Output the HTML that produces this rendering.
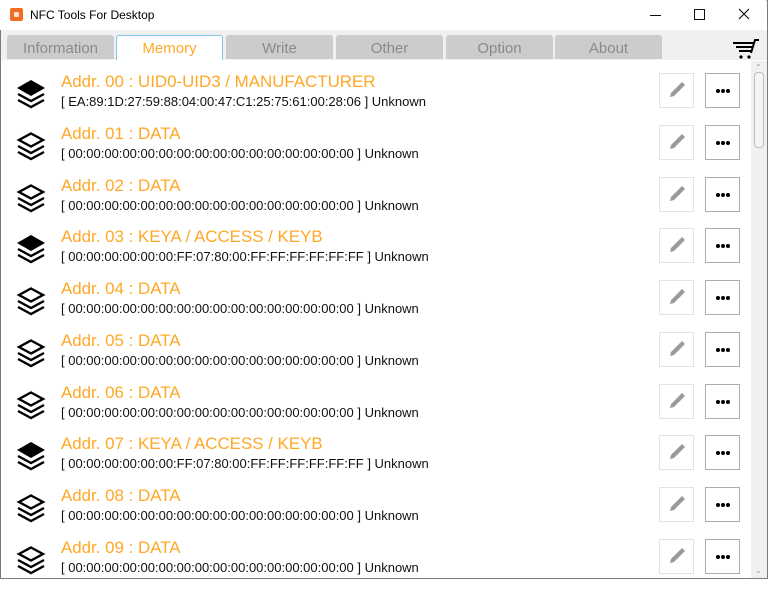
<!DOCTYPE html>
<html><head><meta charset="utf-8"><style>
*{margin:0;padding:0;box-sizing:border-box}
body{width:768px;height:579px;overflow:hidden;background:#fff;font-family:"Liberation Sans",sans-serif;position:relative}
.win{position:absolute;left:0;top:0;width:768px;height:579px;border:1px solid #7a7a7a;border-top:1px solid #aaa}
.title{position:absolute;left:0;top:0;width:766px;height:30px;background:#fff}
.title .ic{position:absolute;left:10px;top:8px;width:13px;height:13px;background:#f26d21;border-radius:2px}
.title .ic:after{content:"";position:absolute;left:4px;top:4px;width:5px;height:5px;background:#fff;border-radius:1px;opacity:.8}
.title .t{position:absolute;left:30px;top:8px;font-size:12px;color:#000}
.strip{position:absolute;left:1px;top:30px;width:766px;height:30px;background:#f0f0f0}
.tab{position:absolute;top:5px;height:24px;width:107px;background:#cccccc;border-radius:3px 3px 0 0;text-align:center;font-size:15px;line-height:27px;color:#8a8a8a}
.tab.act{background:#fff;border:1px solid #7fc4ec;border-bottom:none;color:#ffa827;height:25px;line-height:25px}
.row{position:absolute;left:0;width:750px;height:52px}
.row svg.ly{position:absolute;left:16px;top:8px}
.row .a{position:absolute;left:61px;top:1px;font-size:16.9px;color:#ffa827;white-space:nowrap}
.row .d{position:absolute;left:61px;top:23px;font-size:13px;color:#111;white-space:nowrap}
.b1{position:absolute;left:659px;top:2px;width:35px;height:35px;border:1px solid #e3e3e3;background:#fff}
.b2{position:absolute;left:705px;top:2px;width:35px;height:35px;border:1px solid #adadad;background:#fff}
.b2 i{position:absolute;top:15px;width:4px;height:4px;border-radius:2px;background:#000}
.sb{position:absolute;left:751px;top:61px;width:16px;height:517px;background:#f0f0f0}
.thumb{position:absolute;left:3px;top:11px;width:10px;height:76px;border:1px solid #bdbdbd;border-radius:4px;background:#f5f5f5}
</style></head><body>
<div class="win"></div>
<div class="title"><div class="ic"></div><div class="t">NFC Tools For Desktop</div>
<svg style="position:absolute;left:640px;top:5px" width="120" height="20"><line x1="10" y1="10.5" x2="21" y2="10.5" stroke="#111" stroke-width="1"/><rect x="54.5" y="4.5" width="10" height="10" fill="none" stroke="#111"/><path d="M99 4 L109 14 M109 4 L99 14" stroke="#111" stroke-width="1.2"/></svg>
</div>
<div class="strip">
<div class="tab" style="left:6px">Information</div>
<div class="tab act" style="left:115px">Memory</div>
<div class="tab" style="left:225px">Write</div>
<div class="tab" style="left:335px">Other</div>
<div class="tab" style="left:445px">Option</div>
<div class="tab" style="left:554px">About</div>
<svg style="position:absolute;left:731px;top:8px" width="30" height="22" viewBox="0 0 30 22"><g stroke="#000" stroke-width="2" fill="none"><line x1="1" y1="5" x2="22" y2="5"/><line x1="4" y1="9" x2="21" y2="9"/><line x1="7" y1="13" x2="20" y2="13"/><path d="M19 15 L23 2 L27 2"/></g><circle cx="9" cy="19" r="1.6"/><circle cx="17" cy="19" r="1.6"/></svg>
</div>
<div id="rows"></div>
<div class="sb"><div style="position:absolute;left:4px;top:2px;font-size:8px;color:#999">&#8963;</div><div class="thumb"></div><div style="position:absolute;left:4px;top:505px;font-size:8px;color:#999">&#8964;</div></div>
<script>
var rows=[["Addr. 00 : UID0-UID3 / MANUFACTURER","[ EA:89:1D:27:59:88:04:00:47:C1:25:75:61:00:28:06 ] Unknown",1],
["Addr. 01 : DATA","[ 00:00:00:00:00:00:00:00:00:00:00:00:00:00:00:00 ] Unknown",0],
["Addr. 02 : DATA","[ 00:00:00:00:00:00:00:00:00:00:00:00:00:00:00:00 ] Unknown",0],
["Addr. 03 : KEYA / ACCESS / KEYB","[ 00:00:00:00:00:00:FF:07:80:00:FF:FF:FF:FF:FF:FF ] Unknown",1],
["Addr. 04 : DATA","[ 00:00:00:00:00:00:00:00:00:00:00:00:00:00:00:00 ] Unknown",0],
["Addr. 05 : DATA","[ 00:00:00:00:00:00:00:00:00:00:00:00:00:00:00:00 ] Unknown",0],
["Addr. 06 : DATA","[ 00:00:00:00:00:00:00:00:00:00:00:00:00:00:00:00 ] Unknown",0],
["Addr. 07 : KEYA / ACCESS / KEYB","[ 00:00:00:00:00:00:FF:07:80:00:FF:FF:FF:FF:FF:FF ] Unknown",1],
["Addr. 08 : DATA","[ 00:00:00:00:00:00:00:00:00:00:00:00:00:00:00:00 ] Unknown",0],
["Addr. 09 : DATA","[ 00:00:00:00:00:00:00:00:00:00:00:00:00:00:00:00 ] Unknown",0]];
var h="";
rows.forEach(function(r,i){
var top=71+i*51.75;
var top1=r[2]?'<path d="M15 1 L29 9 L15 17 L1 9 Z" fill="#000"/>':'<path d="M15 2.5 L27 9 L15 15.5 L3 9 Z" fill="none" stroke="#000" stroke-width="2.4"/>';
h+='<div class="row" style="top:'+top+'px"><svg class="ly" width="30" height="30" viewBox="0 0 30 30">'+top1+'<path d="M2 15 L15 22 L28 15" fill="none" stroke="#000" stroke-width="2.4"/><path d="M2 21 L15 28 L28 21" fill="none" stroke="#000" stroke-width="2.4"/></svg><div class="a">'+r[0]+'</div><div class="d">'+r[1]+'</div><div class="b1"><svg width="33" height="33" viewBox="0 0 33 33"><path d="M10 23 L11 19 L22 8 L25 11 L14 22 Z" fill="#9a9a9a"/></svg></div><div class="b2"><i style="left:10px"></i><i style="left:15px"></i><i style="left:20px"></i></div></div>';
});
document.getElementById("rows").innerHTML=h;
</script>
</body></html>
